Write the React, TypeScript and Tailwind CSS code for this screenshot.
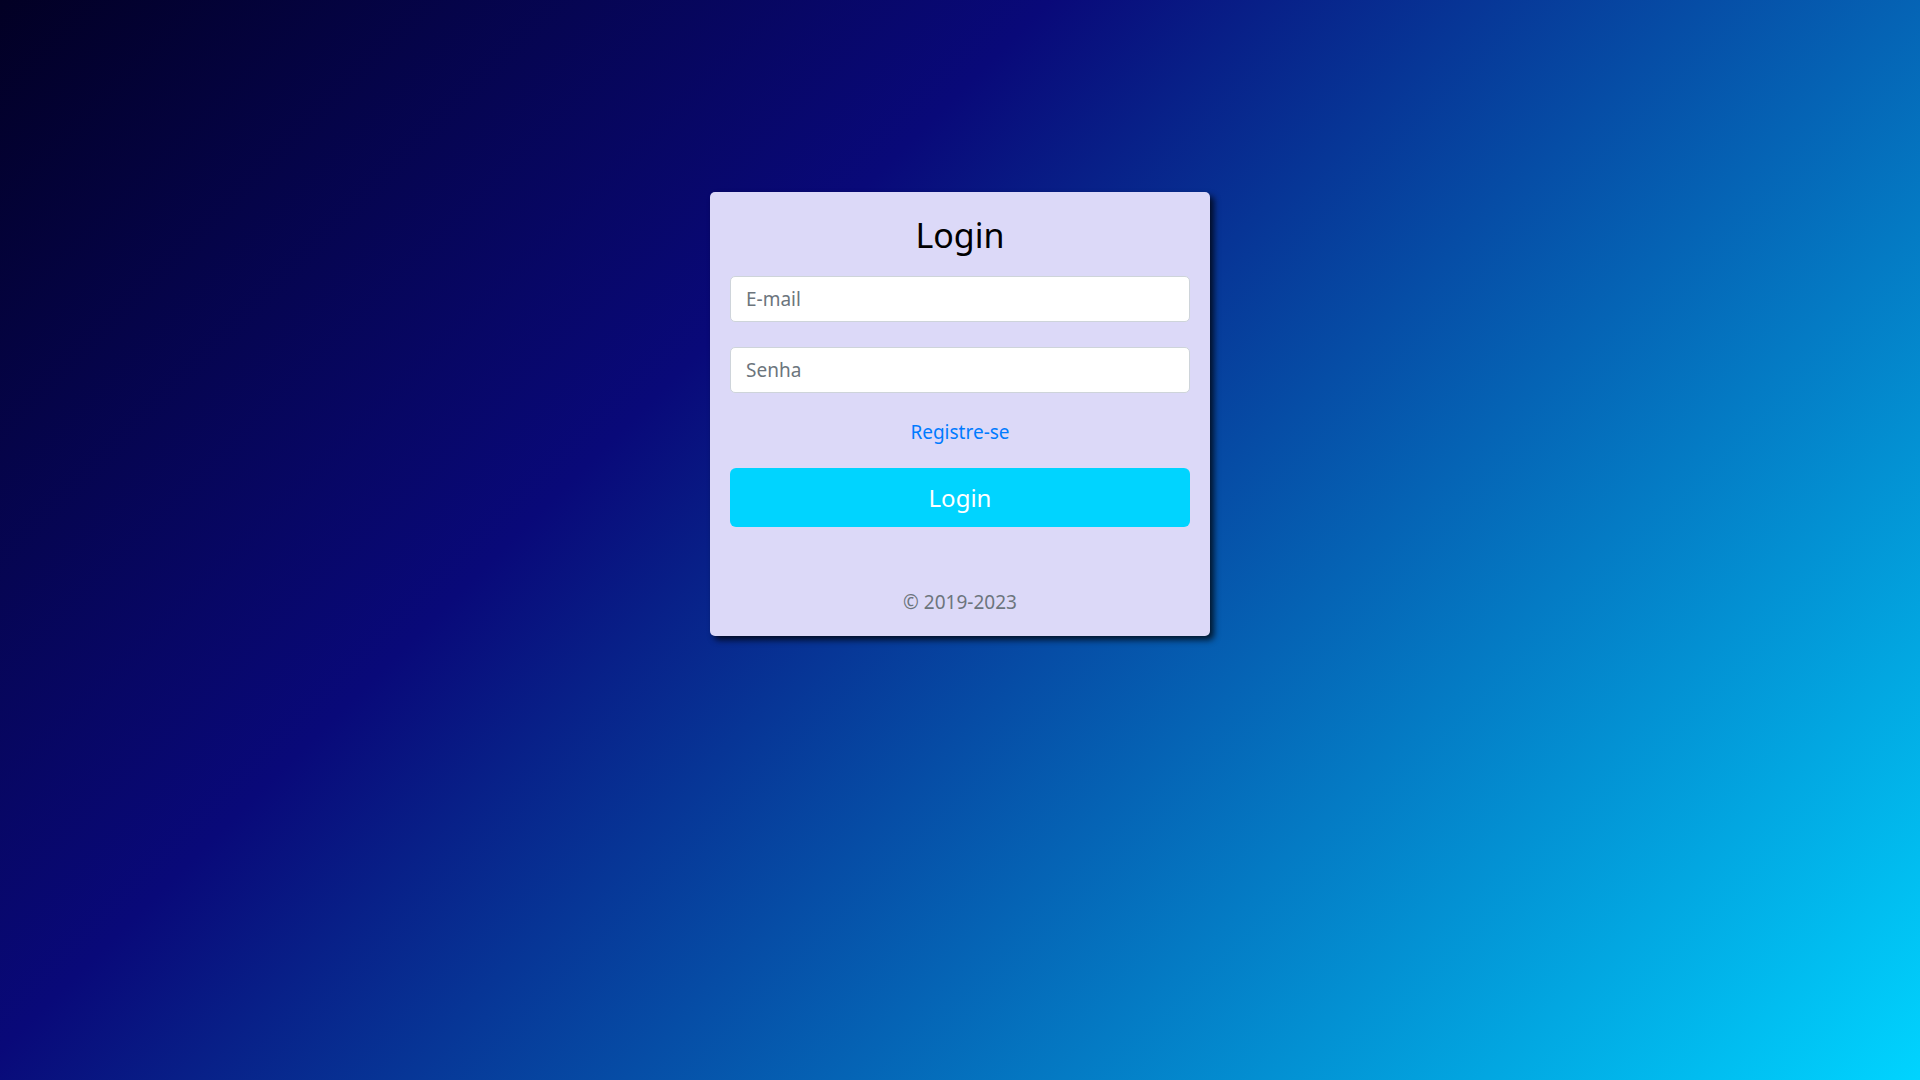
export default function App() {
  return (
    <div className="flex min-h-screen w-full justify-center bg-[linear-gradient(135deg,#020024_0%,#090979_35%,#00d4ff_100%)] font-['Noto_Sans','Open_Sans',sans-serif]">
      <div className="mt-[192px] flex h-[444px] w-[500px] flex-col rounded-[5px] bg-[#dcd9f8] px-5 pt-[22px] pb-[19px] shadow-[4px_4px_6px_rgba(0,0,0,0.75)]">
        <h3 className="text-center text-[34px] leading-[42px] text-black">Login</h3>
        <input
          type="email"
          placeholder="E-mail"
          className="mt-[20px] h-[46px] w-full rounded-[5px] border border-[#ced4da] bg-white px-[15px] text-[19px] text-[#495057] outline-none placeholder:text-[#6c757d]"
        />
        <input
          type="password"
          placeholder="Senha"
          className="mt-[25px] h-[46px] w-full rounded-[5px] border border-[#ced4da] bg-white px-[15px] text-[19px] text-[#495057] outline-none placeholder:text-[#6c757d]"
        />
        <a href="#" className="mt-[24px] block text-center text-[19px] leading-[30px] text-[#007bff]">
          Registre-se
        </a>
        <button
          type="button"
          className="mt-[21px] h-[59px] w-full rounded-[6px] bg-[#00d4ff] text-[24px] text-white"
        >
          Login
        </button>
        <p className="mt-auto text-center text-[19px] leading-[30px] text-[#6c757d]">© 2019-2023</p>
      </div>
    </div>
  )
}
